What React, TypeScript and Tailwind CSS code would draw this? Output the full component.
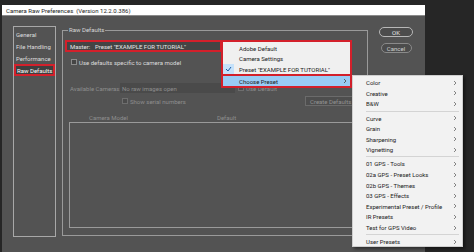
import React from "react"

const font = { fontFamily: "Roboto, 'Liberation Sans', sans-serif" }

function Chevron({ className = "" }: { className?: string }) {
  return (
    <svg width="4" height="6" viewBox="0 0 4 6" className={className}>
      <polyline points="1,1 3,3 1,5" fill="none" stroke="currentColor" strokeWidth="0.8" />
    </svg>
  )
}

function Checkbox({ disabled = false }: { disabled?: boolean }) {
  return (
    <span
      className={`inline-block w-[6px] h-[6px] border ${
        disabled ? "border-[#6e6e6e] bg-[#4b4b4b]" : "border-[#8c8c8c] bg-[#454545]"
      }`}
    />
  )
}

const submenu: (string | null)[] = [
  "Color",
  "Creative",
  "B&W",
  null,
  "Curve",
  "Grain",
  "Sharpening",
  "Vignetting",
  null,
  "01 GPS - Tools",
  "02a GPS - Preset Looks",
  "02b GPS - Themes",
  "03 GPS -  Effects",
  "Experimental Preset / Profile",
  "IR Presets",
  "Test for GPS Video",
  null,
  "User Presets",
]

export default function App() {
  return (
    <div className="relative w-[474px] h-[252px] bg-[#262626] overflow-hidden pt-[5px] pl-[2px]" style={font}>
      {/* dialog */}
      <div className="w-[423px] h-[247px] bg-[#535353] flex flex-col">
        <div className="h-[11px] bg-white border-b border-[#8a8a8a] flex items-center pl-[4px] text-[6px] text-[#222]">
          Camera Raw Preferences&nbsp;&nbsp;(Version 12.2.0.386)
        </div>

        <div className="flex pt-[10px] pl-[11px]">
          {/* nav */}
          <div className="w-[43px] h-[211px] border border-[#a8a8a8] pt-[1px] text-[6px] text-[#dedede]">
            <div className="h-[12px] flex items-center pl-[2px]">General</div>
            <div className="h-[12px] flex items-center pl-[2px]">File Handling</div>
            <div className="h-[12px] flex items-center pl-[2px]">Performance</div>
            <div className="h-[12px] flex items-center pl-[1px] border-2 border-[#d3202b] bg-[#3f3f3f] text-white">
              Raw Defaults
            </div>
          </div>

          {/* group */}
          <fieldset className="ml-[6px] w-[306px] h-[210px] border border-[#9a9a9a] pl-[2px] text-[6px]">
            <legend className="ml-[3px] px-[1px] leading-[8px] text-[#d8d8d8]">Raw Defaults</legend>

            <div className="mt-[6px] w-[157px] h-[12px] border-2 border-[#d3202b] bg-[#444] flex items-center text-[#e4e4e4]">
              <span className="pl-[3px] w-[28px]">Master:</span>
              <span>Preset "EXAMPLE FOR TUTORIAL"</span>
            </div>

            <div className="mt-[5px] h-[10px] pl-[6px] flex items-center gap-[2px] text-[#dcdcdc]">
              <Checkbox />
              <span>Use defaults specific to camera model</span>
            </div>

            <div className="mt-[16px] h-[10px] pl-[5px] flex items-center text-[#8e8e8e] whitespace-nowrap">
              <span className="w-[50px] shrink-0">Available Cameras:</span>
              <span className="w-[115px] shrink-0 h-[10px] bg-[#4a4a4a] flex items-center pl-[2px]">No raw images open</span>
              <span className="ml-[3px] flex items-center gap-[2px]">
                <Checkbox disabled />
                Use Default
              </span>
            </div>

            <div className="mt-[3px] h-[10px] flex items-center text-[#8e8e8e] whitespace-nowrap">
              <span className="ml-[57px] flex items-center gap-[2px]">
                <Checkbox disabled />
                Show serial numbers
              </span>
              <span className="ml-auto mr-[2px] w-[60px] h-[10px] border border-[#6b6b6b] bg-[#4e4e4e] flex items-center pl-[4px] text-[#939393]">
                Create Defaults
              </span>
            </div>

            <div className="mt-[6px] h-[10px] flex items-center text-[#8e8e8e]">
              <span className="ml-[24px] w-[128px]">Camera Model</span>
              <span>Default</span>
            </div>

            <div className="ml-[4px] w-[294px] h-[106px] border border-[#9a9a9a]" />
          </fieldset>

          {/* buttons */}
          <div className="ml-[11px] mt-[1px] flex flex-col items-center gap-[6px] text-[6px]">
            <div className="w-[34px] h-[10px] rounded-full border border-[#b8b8b8] bg-[#4c4c4c] flex items-center justify-center text-[#e6e6e6]">
              OK
            </div>
            <div className="w-[31px] h-[10px] rounded-full border border-[#8a8a8a] bg-[#4c4c4c] flex items-center justify-center text-[#cfcfcf]">
              Cancel
            </div>
          </div>
        </div>
      </div>

      {/* master dropdown menu */}
      <div className="absolute left-[221px] top-[40px] w-[131px] bg-[#f0f0f0] text-[6px] text-[#1a1a1a]">
        <div className="h-[36px] border-2 border-[#d3202b] pt-[1px]">
          <div className="h-[10.5px] flex items-center pl-[16px]">Adobe Default</div>
          <div className="h-[10.5px] flex items-center pl-[16px]">Camera Settings</div>
          <div className="h-[10.5px] flex items-center">
            <span className="w-[11px] h-[10px] mr-[5px] bg-[#c5e2fb] flex items-center justify-center">
              <svg width="7" height="6" viewBox="0 0 7 6">
                <polyline points="1,3 3,5 6,1" fill="none" stroke="#1d5fa8" strokeWidth="1" />
              </svg>
            </span>
            Preset "EXAMPLE FOR TUTORIAL"
          </div>
        </div>
        <div className="h-[12px] border-2 border-t-0 border-[#d3202b] bg-[#99ccf5] flex items-center pl-[16px]">
          <span>Choose Preset</span>
          <Chevron className="ml-auto mr-[3px] text-[#444]" />
        </div>
      </div>

      {/* submenu */}
      <div className="absolute left-[352px] top-[75px] w-[111px] h-[172px] bg-[#f2f2f2] border border-[#cfcfcf] shadow-[2px_2px_3px_rgba(0,0,0,0.45)] pt-[1.5px] text-[6px] text-[#1a1a1a]">
        {submenu.map((item, i) =>
          item === null ? (
            <div key={i} className="h-[3.5px] flex items-center pl-[13px] pr-[3px]">
              <div className="w-full h-px bg-[#d4d4d4]" />
            </div>
          ) : (
            <div key={i} className="h-[10.6px] flex items-center pl-[13px] pr-[5px]">
              <span>{item}</span>
              <Chevron className="ml-auto text-[#666]" />
            </div>
          )
        )}
      </div>
    </div>
  )
}
